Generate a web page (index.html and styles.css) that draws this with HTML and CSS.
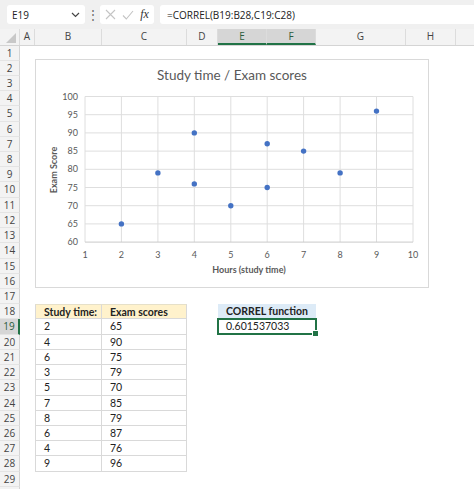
FILE: index.html
```html
<!DOCTYPE html>
<html lang="en">
<head>
  <meta charset="UTF-8">
  <title>CORREL - Study time / Exam scores</title>
  <link rel="stylesheet" href="styles.css">
</head>
<body>

  <!-- Barra de fórmulas -->
  <div class="topbar">
    <div class="namebox">
      <span>E19</span>
      <svg width="9" height="6" viewBox="0 0 9 6"><path d="M1 1 L4.5 4.5 L8 1" fill="none" stroke="#444" stroke-width="1.2"/></svg>
    </div>
    <div class="dots">&#8942;</div>
    <div class="fxbox">
      <svg width="11" height="11" viewBox="0 0 11 11"><path d="M1 1 L10 10 M10 1 L1 10" stroke="#c4c4c4" stroke-width="1.1"/></svg>
      <svg width="12" height="10" viewBox="0 0 12 10"><path d="M1 5.5 L4.3 9 L11 1" fill="none" stroke="#c4c4c4" stroke-width="1.1"/></svg>
      <span class="fx">fx</span>
    </div>
    <div class="formula">=CORREL(B19:B28,C19:C28)</div>
  </div>

  <!-- Cabeçalho das colunas -->
  <div class="colhead">
    <div class="corner"><svg width="10" height="10" viewBox="0 0 10 10"><path d="M10 0 L10 10 L0 10 Z" fill="#c8c8c8"/></svg></div>
    <div class="a">A</div>
    <div class="b">B</div>
    <div class="c">C</div>
    <div class="d">D</div>
    <div class="e on">E</div>
    <div class="f on">F</div>
    <div class="g">G</div>
    <div class="h">H</div>
    <div class="i"></div>
  </div>

  <div class="sheet">
    <div class="row"><div class="rh">1</div></div>
    <div class="row"><div class="rh">2</div></div>
    <div class="row"><div class="rh">3</div></div>
    <div class="row"><div class="rh">4</div></div>
    <div class="row"><div class="rh">5</div></div>
    <div class="row"><div class="rh">6</div></div>
    <div class="row"><div class="rh">7</div></div>
    <div class="row"><div class="rh">8</div></div>
    <div class="row"><div class="rh">9</div></div>
    <div class="row"><div class="rh">10</div></div>
    <div class="row"><div class="rh">11</div></div>
    <div class="row"><div class="rh">12</div></div>
    <div class="row"><div class="rh">13</div></div>
    <div class="row"><div class="rh">14</div></div>
    <div class="row"><div class="rh">15</div></div>
    <div class="row"><div class="rh">16</div></div>
    <div class="row"><div class="rh">17</div></div>
    <div class="row">
      <div class="rh">18</div><div class="a"></div>
      <div class="b t hd first">Study time:</div><div class="c t hd">Exam scores</div>
      <div class="d"></div><div class="ef blue">CORREL function</div>
    </div>
    <div class="row">
      <div class="rh on">19</div><div class="a"></div>
      <div class="b t first">2</div><div class="c t">65</div>
      <div class="d"></div><div class="ef sel">0.601537033</div>
    </div>
    <div class="row"><div class="rh">20</div><div class="a"></div><div class="b t first">4</div><div class="c t">90</div></div>
    <div class="row"><div class="rh">21</div><div class="a"></div><div class="b t first">6</div><div class="c t">75</div></div>
    <div class="row"><div class="rh">22</div><div class="a"></div><div class="b t first">3</div><div class="c t">79</div></div>
    <div class="row"><div class="rh">23</div><div class="a"></div><div class="b t first">5</div><div class="c t">70</div></div>
    <div class="row"><div class="rh">24</div><div class="a"></div><div class="b t first">7</div><div class="c t">85</div></div>
    <div class="row"><div class="rh">25</div><div class="a"></div><div class="b t first">8</div><div class="c t">79</div></div>
    <div class="row"><div class="rh">26</div><div class="a"></div><div class="b t first">6</div><div class="c t">87</div></div>
    <div class="row"><div class="rh">27</div><div class="a"></div><div class="b t first">4</div><div class="c t">76</div></div>
    <div class="row"><div class="rh">28</div><div class="a"></div><div class="b t first">9</div><div class="c t">96</div></div>
    <div class="row"><div class="rh">29</div></div>
    <div class="row"><div class="rh"></div></div>
  </div>

  <!-- Gráfico de dispersão (flutua sobre as células) -->
  <div class="chart">
    <svg width="392" height="227" viewBox="0 0 392 227">
      <g class="grid">
        <line x1="49" y1="36.5" x2="377" y2="36.5"/>
        <line x1="49" y1="54.7" x2="377" y2="54.7"/>
        <line x1="49" y1="72.9" x2="377" y2="72.9"/>
        <line x1="49" y1="91.1" x2="377" y2="91.1"/>
        <line x1="49" y1="109.3" x2="377" y2="109.3"/>
        <line x1="49" y1="127.5" x2="377" y2="127.5"/>
        <line x1="49" y1="145.7" x2="377" y2="145.7"/>
        <line x1="49" y1="163.9" x2="377" y2="163.9"/>
        <line x1="49" y1="36.5" x2="49" y2="182.1"/>
        <line x1="85.4" y1="36.5" x2="85.4" y2="182.1"/>
        <line x1="121.9" y1="36.5" x2="121.9" y2="182.1"/>
        <line x1="158.3" y1="36.5" x2="158.3" y2="182.1"/>
        <line x1="194.8" y1="36.5" x2="194.8" y2="182.1"/>
        <line x1="231.2" y1="36.5" x2="231.2" y2="182.1"/>
        <line x1="267.6" y1="36.5" x2="267.6" y2="182.1"/>
        <line x1="304.1" y1="36.5" x2="304.1" y2="182.1"/>
        <line x1="340.5" y1="36.5" x2="340.5" y2="182.1"/>
        <line x1="377" y1="36.5" x2="377" y2="182.1"/>
      </g>
      <line class="axis" x1="49" y1="182.1" x2="377" y2="182.1"/>

      <text class="title" x="196" y="20" text-anchor="middle">Study time / Exam scores</text>

      <g class="ylab" text-anchor="end">
        <text x="42" y="39.5">100</text>
        <text x="42" y="57.7">95</text>
        <text x="42" y="75.9">90</text>
        <text x="42" y="94.1">85</text>
        <text x="42" y="112.3">80</text>
        <text x="42" y="130.5">75</text>
        <text x="42" y="148.7">70</text>
        <text x="42" y="166.9">65</text>
        <text x="42" y="185.1">60</text>
      </g>
      <g class="xlab" text-anchor="middle">
        <text x="49" y="197.5">1</text>
        <text x="85.4" y="197.5">2</text>
        <text x="121.9" y="197.5">3</text>
        <text x="158.3" y="197.5">4</text>
        <text x="194.8" y="197.5">5</text>
        <text x="231.2" y="197.5">6</text>
        <text x="267.6" y="197.5">7</text>
        <text x="304.1" y="197.5">8</text>
        <text x="340.5" y="197.5">9</text>
        <text x="377" y="197.5">10</text>
      </g>

      <text class="atitle" x="213" y="213" text-anchor="middle">Hours (study time)</text>
      <text class="atitle" x="0" y="0" text-anchor="middle" transform="translate(20.5 110) rotate(-90)">Exam Score</text>

      <g class="pts">
        <circle cx="85.4" cy="163.9" r="2.7"/>
        <circle cx="158.3" cy="72.9" r="2.7"/>
        <circle cx="231.2" cy="127.5" r="2.7"/>
        <circle cx="121.9" cy="112.9" r="2.7"/>
        <circle cx="194.8" cy="145.7" r="2.7"/>
        <circle cx="267.6" cy="91.1" r="2.7"/>
        <circle cx="304.1" cy="112.9" r="2.7"/>
        <circle cx="231.2" cy="83.8" r="2.7"/>
        <circle cx="158.3" cy="123.9" r="2.7"/>
        <circle cx="340.5" cy="51.1" r="2.7"/>
      </g>
    </svg>
  </div>

</body>
</html>
```

FILE: styles.css
```css
body {
  margin: 0;
  width: 474px;
  height: 489px;
  overflow: hidden;
  position: relative;
  background: #fff;
  font-family: "Open Sans", "Noto Sans", sans-serif;
  color: #222;
}

/* Barra de fórmulas */
.topbar {
  height: 29px;
  background-color: #f0f0f0;
  display: flex;
  align-items: center;
  padding-left: 7px;
  box-sizing: border-box;
}

.namebox {
  width: 78px;
  height: 19px;
  background: #fff;
  border-radius: 3px;
  display: flex;
  align-items: center;
  justify-content: space-between;
  padding: 0 5px 0 5px;
  box-sizing: border-box;
  font-size: 10px;
}

.dots {
  width: 15px;
  text-align: center;
  color: #666;
  font-size: 12px;
}

.fxbox {
  width: 54px;
  height: 19px;
  background: #fff;
  border-radius: 3px;
  display: flex;
  align-items: center;
  justify-content: space-around;
  padding: 0 2px;
  box-sizing: border-box;
}

.fx {
  font-family: "Liberation Serif", serif;
  font-style: italic;
  font-size: 12px;
  color: #333;
}

.formula {
  flex: 1;
  height: 19px;
  margin-left: 6px;
  background: #fff;
  border-radius: 3px 0 0 3px;
  font-size: 10px;
  padding-left: 7px;
  display: flex;
  align-items: center;
  color: #222;
}

/* Cabeçalhos */
.colhead {
  display: flex;
  height: 16.5px;
  background-color: #f3f3f3;
  border-bottom: 1px solid #d4d4d4;
  box-sizing: border-box;
}

.colhead div {
  box-sizing: border-box;
  border-right: 1px solid #dcdcdc;
  text-align: center;
  font-size: 10px;
  line-height: 15.5px;
  color: #444;
}

.colhead .corner {
  display: flex;
  align-items: flex-end;
  justify-content: flex-end;
  padding: 0 3px 2px 0;
}

.colhead .on {
  background-color: #d6d6d6;
  border-bottom: 2px solid #217346;
  color: #2b5d3d;
}

.colhead .i {
  flex: 1;
  border-right: none;
}

.corner, .rh { width: 20px; flex: none; }
.a { width: 15px; flex: none; }
.b { width: 67px; flex: none; }
.c { width: 85px; flex: none; }
.d { width: 31px; flex: none; }
.e, .f { width: 49px; flex: none; }
.ef { width: 98px; flex: none; }
.g { width: 90px; flex: none; }
.h { width: 50px; flex: none; }

.row {
  display: flex;
  height: 15.22px;
}

.rh {
  background-color: #f3f3f3;
  border-right: 1px solid #d4d4d4;
  border-bottom: 1px solid #e4e4e4;
  box-sizing: border-box;
  font-size: 10px;
  text-align: center;
  line-height: 14.5px;
  color: #444;
}

.rh.on {
  background-color: #d6d6d6;
  border-right: 2px solid #217346;
  color: #2b5d3d;
}

/* Células */
.t, .ef {
  box-sizing: border-box;
  padding-left: 8px;
  font-family: Lato, "Liberation Sans", sans-serif;
  font-size: 10.5px;
  line-height: 14px;
  color: #222;
  white-space: nowrap;
}

.t {
  border-right: 1px solid #d9d9d9;
  border-bottom: 1px solid #d9d9d9;
}

.t.first {
  border-left: 1px solid #d9d9d9;
}

.hd {
  background-color: #fff2cc;
  border-top: 1px solid #e6e0c8;
  font-weight: bold;
}

.blue {
  background-color: #ddebf7;
  font-weight: bold;
}

.sel {
  position: relative;
  width: 100px;
  margin-left: -1px;
  margin-top: -1px;
  height: 17px;
  border: 2px solid #217346;
  padding-left: 7px;
  line-height: 13px;
}

.sel::after {
  content: "";
  position: absolute;
  right: -4px;
  bottom: -4px;
  width: 5px;
  height: 5px;
  background: #217346;
  border: 1px solid #fff;
}

/* Gráfico */
.chart {
  position: absolute;
  left: 35px;
  top: 59px;
  width: 394px;
  height: 229px;
  border: 1px solid #d9d9d9;
  background: #fff;
  box-sizing: border-box;
}

.chart svg {
  display: block;
  font-family: Lato, "Liberation Sans", sans-serif;
}

.grid line {
  stroke: #dedede;
  stroke-width: 1;
}

.axis {
  stroke: #c9c9c9;
  stroke-width: 1;
}

.title {
  font-size: 13.5px;
  fill: #595959;
}

.ylab text, .xlab text {
  font-size: 9px;
  fill: #595959;
}

.atitle {
  font-size: 9px;
  font-weight: bold;
  fill: #595959;
}

.pts circle {
  fill: #4472c4;
}
```
